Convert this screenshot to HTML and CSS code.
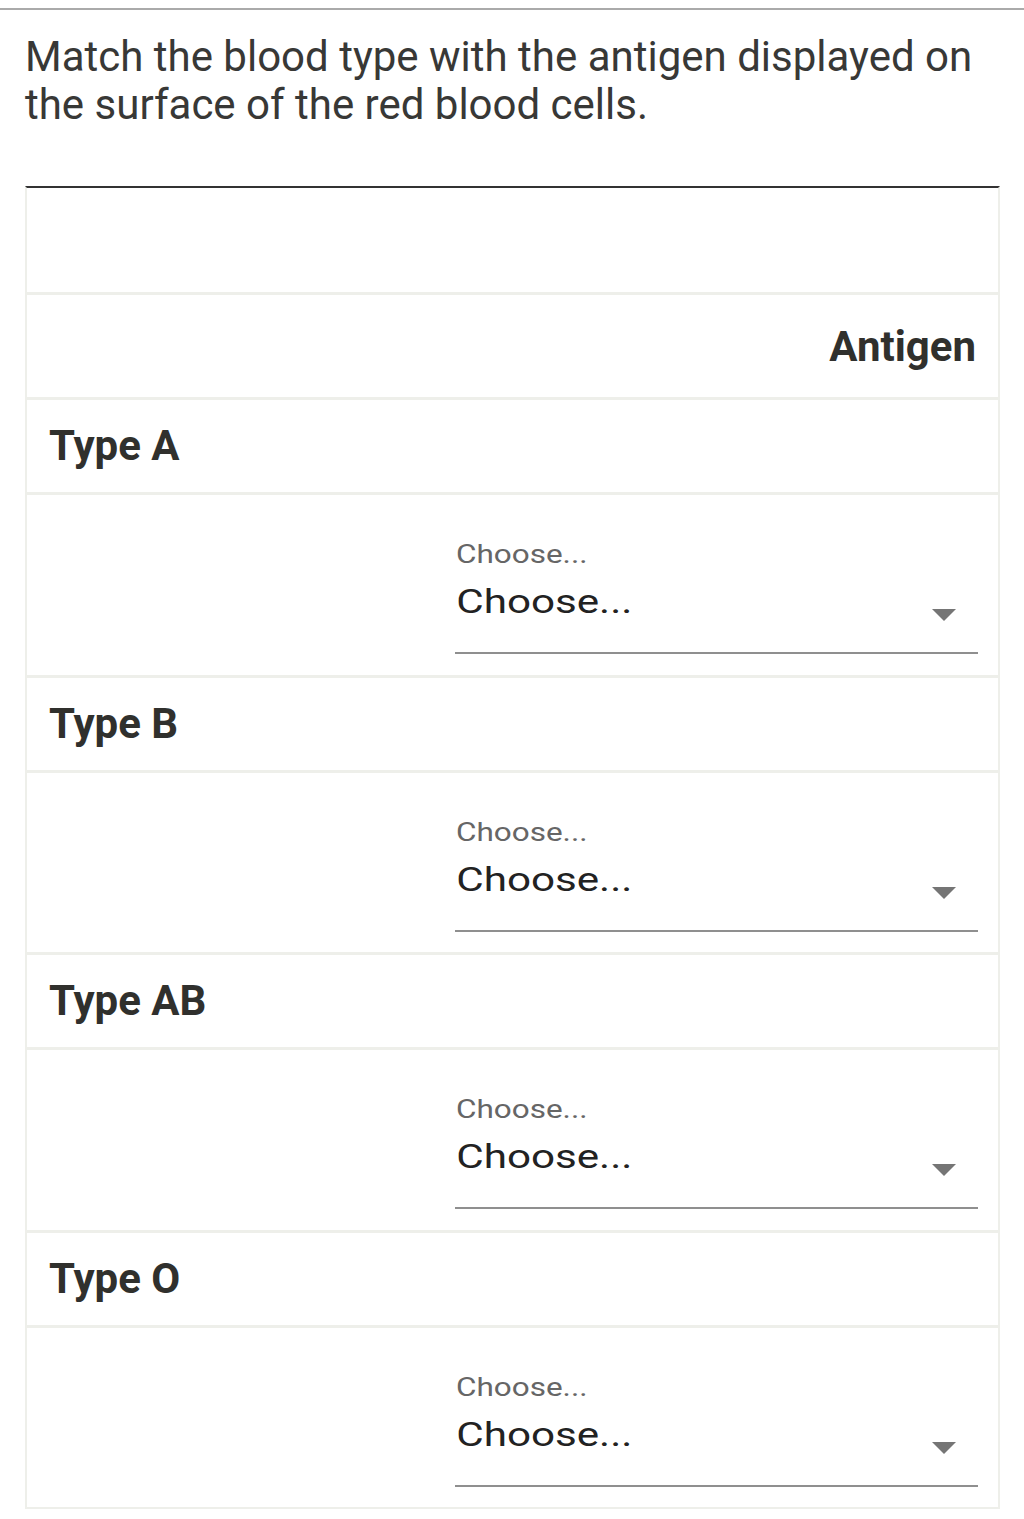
FILE: index.html
```html
<!DOCTYPE html>
<html lang="en">
<head>
<meta charset="utf-8">
<title>Blood type matching</title>
<link rel="stylesheet" href="styles.css">
</head>
<body>
<div class="topbar"></div>
<main class="page">
  <h1 class="question">Match the blood type with the antigen displayed on the surface of the red blood cells.</h1>
  <div class="match-table">
    <div class="row row-empty"></div>
    <div class="row row-head"><span class="col-title">Antigen</span></div>

    <div class="row row-label"><span class="type-name">Type A</span></div>
    <div class="row row-choose">
      <div class="field">
        <div class="field-label"><span class="stretch-s">Choose...</span></div>
        <div class="select"><span class="select-text">Choose...</span><span class="caret"></span></div>
      </div>
    </div>

    <div class="row row-label"><span class="type-name">Type B</span></div>
    <div class="row row-choose">
      <div class="field">
        <div class="field-label"><span class="stretch-s">Choose...</span></div>
        <div class="select"><span class="select-text">Choose...</span><span class="caret"></span></div>
      </div>
    </div>

    <div class="row row-label"><span class="type-name">Type AB</span></div>
    <div class="row row-choose">
      <div class="field">
        <div class="field-label"><span class="stretch-s">Choose...</span></div>
        <div class="select"><span class="select-text">Choose...</span><span class="caret"></span></div>
      </div>
    </div>

    <div class="row row-label"><span class="type-name">Type O</span></div>
    <div class="row row-choose row-last">
      <div class="field">
        <div class="field-label"><span class="stretch-s">Choose...</span></div>
        <div class="select"><span class="select-text">Choose...</span><span class="caret"></span></div>
      </div>
    </div>
  </div>
</main>
</body>
</html>
```

FILE: styles.css
```css
html, body {
  margin: 0;
  padding: 0;
  background: #ffffff;
}

body {
  font-family: Roboto, "Liberation Sans", Arial, sans-serif;
  color: #333333;
  padding-top: 8px;
}

.topbar {
  height: 2px;
  background: #aaaaaa;
}

.page {
  padding: 0 24px 0 25px;
}

.question {
  margin: 23px 0 0 0;
  font-size: 42px;
  font-weight: 400;
  line-height: 48px;
  color: #383836;
  padding-right: 0;
}

.match-table {
  margin-top: 57px;
  border-top: 2px solid #333333;
  border-left: 2px solid #eeefea;
  border-right: 2px solid #eeefea;
  border-bottom: 2px solid #eeefea;
  margin-bottom: 10px;
}

.row {
  box-sizing: border-box;
  border-bottom: 3px solid #eeefea;
}

.row-last {
  border-bottom: none;
}

.row-empty {
  height: 107px;
}

.row-head {
  height: 105px;
  padding: 27px 22px 0 22px;
  display: flex;
  justify-content: flex-end;
}

.col-title,
.type-name {
  font-size: 42px;
  font-weight: 700;
  line-height: 50px;
  color: #30302d;
}

.row-label {
  height: 95px;
  padding: 21px 22px 0 22px;
}

.row-choose {
  height: 182.5px;
  padding: 44px 20px 0 22px;
  display: flex;
  justify-content: flex-end;
}

.row-choose.row-last {
  height: 179.5px;
}

.field {
  width: 523px;
}

.field-label {
  font-size: 26px;
  line-height: 30px;
  color: #666666;
  padding-left: 1px;
}

.stretch-s {
  display: inline-block;
  transform: scaleX(1.21);
  transform-origin: left center;
}

.select {
  margin-top: 12px;
  height: 73px;
  box-sizing: border-box;
  border-bottom: 2px solid #8f8f8f;
  display: flex;
  justify-content: space-between;
  align-items: flex-start;
}

.select-text {
  display: inline-block;
  font-size: 34px;
  line-height: 40px;
  color: #222222;
  padding-left: 1px;
  transform: scaleX(1.24);
  transform-origin: left center;
}

.caret {
  width: 0;
  height: 0;
  margin-top: 28px;
  margin-right: 22px;
  border-left: 12px solid transparent;
  border-right: 12px solid transparent;
  border-top: 12px solid #757575;
}
```
